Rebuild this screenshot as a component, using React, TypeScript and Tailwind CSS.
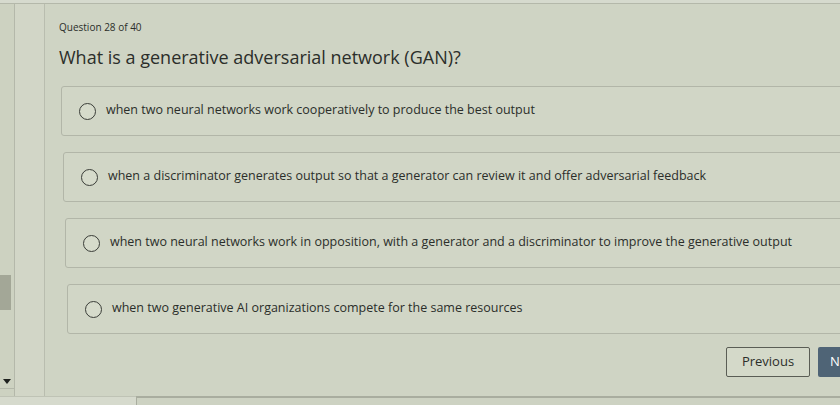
const options = [
  "when two neural networks work cooperatively to produce the best output",
  "when a discriminator generates output so that a generator can review it and offer adversarial feedback",
  "when two neural networks work in opposition, with a generator and a discriminator to improve the generative output",
  "when two generative AI organizations compete for the same resources",
]

export default function App() {
  return (
    <div
      className="w-[840px] h-[405px] overflow-hidden bg-[#cfd4c4] text-[#2b2e2a] flex flex-col"
      style={{ fontFamily: '"Open Sans", "Noto Sans", sans-serif' }}
    >
      <div className="h-[4px] bg-[#d6dace] border-b border-[#b4b8aa]" />
      <div className="flex flex-1 min-h-0">
        {/* scrollbar */}
        <div className="w-[15px] border-r border-[#b4b8aa] bg-[#cdd2c1] flex flex-col">
          <div className="h-[271px]" />
          <div className="h-[35px] w-[11px] bg-[#a3a797]" />
          <div className="flex-1" />
          <div className="h-[12px] flex items-center justify-center pb-[2px]">
            <div className="w-0 h-0 border-l-[4px] border-r-[4px] border-t-[5px] border-l-transparent border-r-transparent border-t-[#1e211e]" />
          </div>
          <div className="h-[8px] border-t border-[#b4b8aa]" />
        </div>
        {/* gutter */}
        <div className="w-[30px] border-r border-[#b9bdaf] bg-[#d2d6c7]" />

        {/* main */}
        <div className="flex-1 min-w-0 pl-[14px] flex flex-col">
          <div className="pt-[16px] text-[10px] leading-[15px]">Question 28 of 40</div>
          <h1 className="mt-[11px] text-[18px] leading-[23px]">
            What is a generative adversarial network (GAN)?
          </h1>
          <div className="mt-[17px] flex flex-col gap-[16px] -mr-[6px]">
            {options.map((text, i) => (
              <div
                key={i}
                className="h-[50px] flex items-center rounded-[3px] border border-[#b2b6a8] bg-[#d1d6c6]"
                style={{ marginLeft: 2 + i * 2 }}
              >
                <div className="ml-[17px] w-[17px] h-[17px] rounded-full border-[1.5px] border-[#3a3d38] bg-[#d6dbcb] shrink-0" />
                <span className="ml-[10px] text-[12.5px] leading-[16px] whitespace-nowrap -mt-[2px]">{text}</span>
              </div>
            ))}
          </div>
          <div className="mt-[13px] flex justify-end items-center gap-[8px] -mr-[40px]">
            <button className="h-[30px] w-[84px] rounded-[2px] border border-[#5a5d55] bg-[#d4d9c9] text-[13px] text-[#2b2e2a]">
              Previous
            </button>
            <button className="h-[30px] w-[62px] rounded-[2px] bg-[#4f6476] text-[13px] text-white text-left pl-[12px]">
              Next
            </button>
          </div>
        </div>
      </div>
      <div className="h-[9px] flex">
        <div className="w-[136px] bg-[#d6dacd] border-t border-[#bfc3b5]" />
        <div className="flex-1 bg-[#cdd2c2] border-t-2 border-l border-[#a9ad9f]" />
      </div>
    </div>
  )
}
